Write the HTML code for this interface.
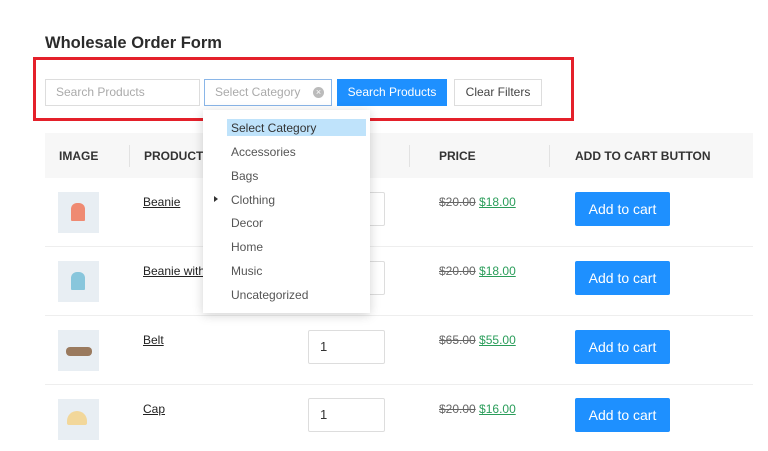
<!DOCTYPE html><html><head><style>
body{margin:0;width:768px;height:451px;overflow:hidden;background:#fff;font-family:"Liberation Sans",sans-serif;position:relative;color:#333}
.a{position:absolute}
h1{position:absolute;left:45px;top:34px;margin:0;font-size:16.5px;font-weight:bold;color:#2b2b2b}
.red{left:33px;top:57px;width:535px;height:58px;border:3px solid #e4202a}
.inp{border:1px solid #ddd;background:#fff;font-size:12px;color:#aaa;box-sizing:border-box;line-height:24px;padding-left:10px;height:27px}
.btn{background:#1e90ff;color:#fff;font-size:12px;text-align:center;line-height:27px;height:27px}
.th{top:133px;height:45px;left:45px;width:708px;background:#f7f7f7}
.hd{top:149px;font-size:12px;font-weight:bold;color:#333}
.sep{top:145px;width:1px;height:22px;background:#e2e2e2}
.row{left:45px;width:708px;height:1px;background:#eee}
.img{left:58px;width:41px;height:41px;background:#e8eef3}
.nm{left:143px;font-size:12px;color:#222;text-decoration:underline}
.q{left:308px;width:77px;height:34px;border:1px solid #ddd;box-sizing:border-box;border-radius:2px;font-size:13px;line-height:32px;padding-left:11px;color:#333}
.pr{left:439px;font-size:12px}
.pr s{color:#666}.pr span{color:#2a9d5a;text-decoration:underline}
.cart{left:575px;width:95px;height:34px;background:#1e90ff;color:#fff;font-size:14px;text-align:center;line-height:34px;border-radius:2px}
.dd{left:203px;top:110px;width:167px;height:203px;background:#fff;box-shadow:0 2px 10px rgba(0,0,0,.18)}
.it{left:231px;font-size:12px;color:#555}
</style></head><body>
<h1>Wholesale Order Form</h1>
<div class="a red"></div>
<div class="a inp" style="left:45px;top:79px;width:155px">Search Products</div>
<div class="a inp" style="left:204px;top:79px;width:128px;border-color:#8ab6e8">Select Category<span style="position:absolute;left:108px;top:7px;width:11px;height:11px;border-radius:50%;background:#bbb;color:#fff;font-size:9px;line-height:11px;text-align:center">×</span></div>
<div class="a btn" style="left:337px;top:79px;width:110px">Search Products</div>
<div class="a inp" style="left:454px;top:79px;width:88px;color:#444;padding:0;text-align:center">Clear Filters</div>
<div class="a th"></div>
<div class="a hd" style="left:59px">IMAGE</div>
<div class="a sep" style="left:129px"></div>
<div class="a hd" style="left:144px">PRODUCT NAME</div>
<div class="a sep" style="left:409px"></div>
<div class="a hd" style="left:439px">PRICE</div>
<div class="a sep" style="left:549px"></div>
<div class="a hd" style="left:575px">ADD TO CART BUTTON</div>

<div class="a row" style="top:246px"></div><div class="a row" style="top:315px"></div><div class="a row" style="top:384px"></div>

<div class="a img" style="top:192px"><div class="a" style="left:13px;top:11px;width:14px;height:18px;background:#ef8a72;border-radius:6px 6px 1px 1px"></div></div>
<div class="a img" style="top:261px"><div class="a" style="left:13px;top:11px;width:14px;height:18px;background:#88c6dc;border-radius:6px 6px 1px 1px"></div></div>
<div class="a img" style="top:330px"><div class="a" style="left:8px;top:17px;width:26px;height:9px;background:#9a7a5e;border-radius:4px"></div></div>
<div class="a img" style="top:399px"><div class="a" style="left:9px;top:12px;width:20px;height:14px;background:#f2d79a;border-radius:10px 10px 2px 2px"></div></div>

<div class="a nm" style="top:195px">Beanie</div>
<div class="a nm" style="top:264px">Beanie with Logo</div>
<div class="a nm" style="top:333px">Belt</div>
<div class="a nm" style="top:402px">Cap</div>

<div class="a q" style="top:192px">1</div><div class="a q" style="top:261px">1</div><div class="a q" style="top:330px">1</div><div class="a q" style="top:398px">1</div>

<div class="a pr" style="top:195px"><s>$20.00</s> <span>$18.00</span></div>
<div class="a pr" style="top:264px"><s>$20.00</s> <span>$18.00</span></div>
<div class="a pr" style="top:333px"><s>$65.00</s> <span>$55.00</span></div>
<div class="a pr" style="top:402px"><s>$20.00</s> <span>$16.00</span></div>

<div class="a cart" style="top:192px">Add to cart</div><div class="a cart" style="top:261px">Add to cart</div><div class="a cart" style="top:330px">Add to cart</div><div class="a cart" style="top:398px">Add to cart</div>

<div class="a dd"></div>
<div class="a" style="left:227px;top:119px;width:139px;height:17px;background:#bfe3fb"></div>
<div class="a it" style="top:121px;color:#333">Select Category</div>
<div class="a it" style="top:145px">Accessories</div>
<div class="a it" style="top:169px">Bags</div>
<div class="a" style="left:214px;top:196px;width:0;height:0;border-left:4px solid #333;border-top:3px solid transparent;border-bottom:3px solid transparent"></div>
<div class="a it" style="top:193px">Clothing</div>
<div class="a it" style="top:216px">Decor</div>
<div class="a it" style="top:240px">Home</div>
<div class="a it" style="top:264px">Music</div>
<div class="a it" style="top:288px">Uncategorized</div>
</body></html>
